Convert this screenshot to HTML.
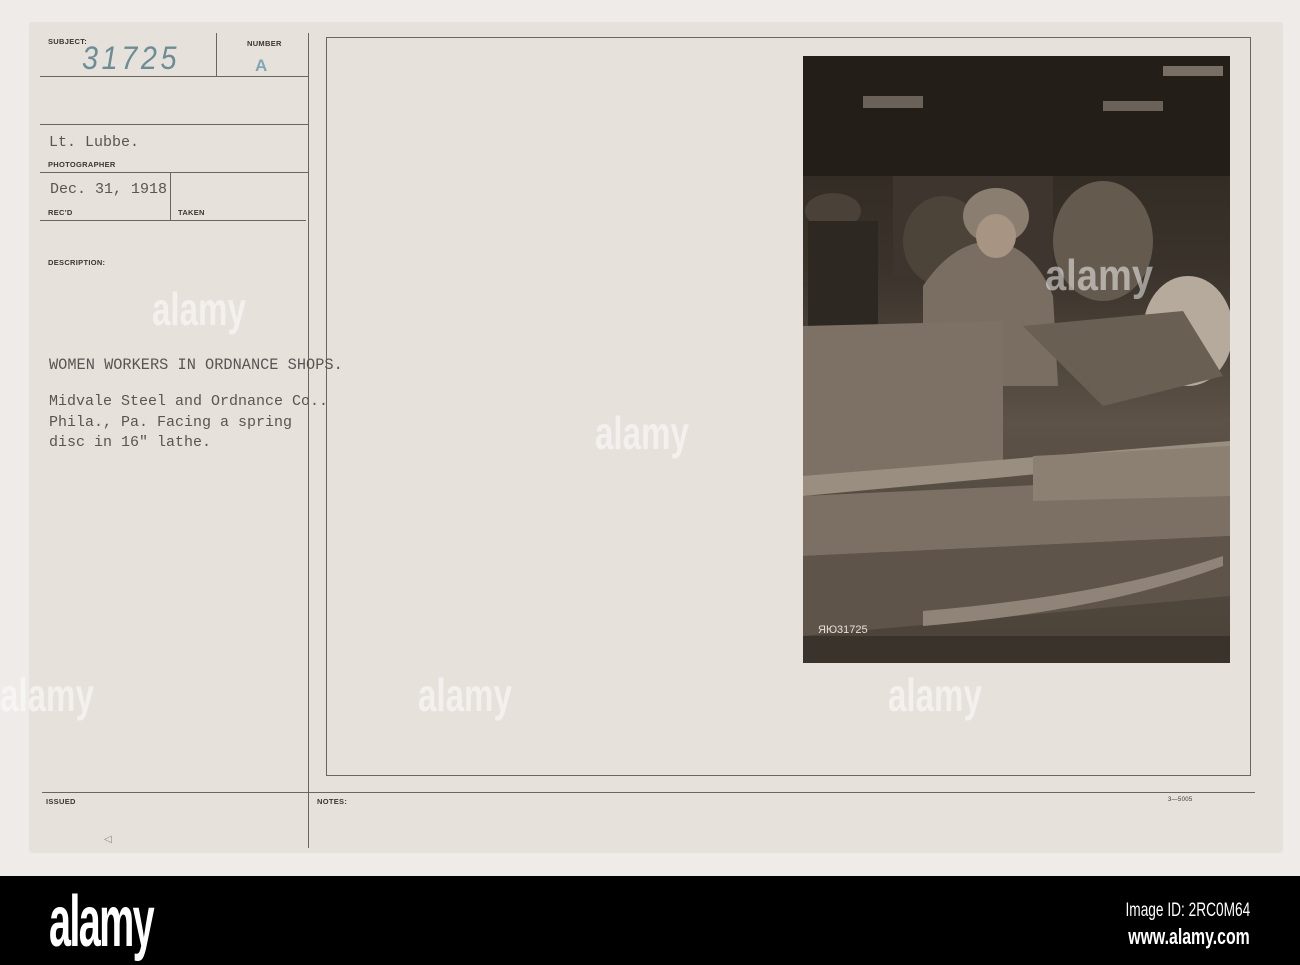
<!DOCTYPE html>
<html><head><meta charset="utf-8"><style>
*{margin:0;padding:0;box-sizing:border-box}
body{width:1300px;height:965px;background:#efebe9;position:relative;overflow:hidden;font-family:"Liberation Sans",sans-serif}
.card{position:absolute;left:29px;top:22px;width:1254px;height:831px;background:#e7e1dc;border-radius:3px}
.l{position:absolute;background:#6a6560}
.t{position:absolute;font-family:"Liberation Mono",monospace;color:#5a5550;font-size:15px;white-space:pre}
.s{position:absolute;font-family:"Liberation Sans",sans-serif;font-size:7.5px;font-weight:bold;color:#3a3632;letter-spacing:.3px}
.wm{position:absolute;color:rgba(255,255,255,.5);font-family:"Liberation Sans",sans-serif;font-weight:bold;transform:scaleX(.72);transform-origin:left top}
.bar{position:absolute;left:0;top:876px;width:1300px;height:89px;background:#000}
</style></head><body>
<div class="card"></div>
<div class="l" style="left:40px;top:76px;width:268px;height:1px"></div>
<div class="l" style="left:216px;top:33px;width:1px;height:44px"></div>
<div class="l" style="left:40px;top:124px;width:268px;height:1px"></div>
<div class="l" style="left:40px;top:172px;width:268px;height:1px"></div>
<div class="l" style="left:170px;top:173px;width:1px;height:47px"></div>
<div class="l" style="left:40px;top:220px;width:266px;height:1px"></div>
<div class="l" style="left:308px;top:33px;width:1px;height:815px"></div>
<div style="position:absolute;left:326px;top:37px;width:925px;height:739px;border:1px solid #6a6560"></div>
<div class="l" style="left:42px;top:792px;width:1213px;height:1px"></div>
<div class="s" style="left:48px;top:37px">SUBJECT:</div>
<div class="s" style="left:247px;top:39px">NUMBER</div>
<div style="position:absolute;left:82px;top:40px;font-family:'Liberation Sans',sans-serif;font-style:italic;font-size:32px;color:#6b8d96;letter-spacing:4px;transform:scaleX(.9);transform-origin:left top">31725</div>
<div style="position:absolute;left:255px;top:56px;font-family:'Liberation Sans';font-weight:bold;font-size:17px;color:#7fa8b2">A</div>
<div class="t" style="left:49px;top:134px;font-size:15px">Lt. Lubbe.</div>
<div class="s" style="left:48px;top:160px">PHOTOGRAPHER</div>
<div class="t" style="left:50px;top:181px">Dec. 31, 1918</div>
<div class="s" style="left:48px;top:208px">REC'D</div>
<div class="s" style="left:178px;top:208px">TAKEN</div>
<div class="s" style="left:48px;top:258px">DESCRIPTION:</div>
<div class="t" style="left:49px;top:356px;font-size:15.3px">WOMEN WORKERS IN ORDNANCE SHOPS.</div>
<div class="t" style="left:49px;top:392px;font-size:15px;line-height:20.5px">Midvale Steel and Ordnance Co..
Phila., Pa. Facing a spring
disc in 16" lathe.</div>
<div class="s" style="left:46px;top:797px">ISSUED</div>
<div class="s" style="left:317px;top:797px">NOTES:</div>
<div class="s" style="left:1168px;top:797px;font-weight:normal;font-size:6px">3—5005</div>
<div style="position:absolute;left:104px;top:834px;font-size:10px;color:#888">◁</div>
<svg style="position:absolute;left:803px;top:56px" width="427" height="607" viewBox="0 0 427 607">
<defs><linearGradient id="g" x1="0" y1="0" x2="0" y2="1"><stop offset="0" stop-color="#2a241e"/><stop offset=".35" stop-color="#3a332b"/><stop offset=".6" stop-color="#5c5247"/><stop offset="1" stop-color="#4a4238"/></linearGradient></defs>
<rect width="427" height="607" fill="url(#g)"/>
<rect x="0" y="0" width="427" height="120" fill="#241e19"/>
<rect x="60" y="40" width="60" height="12" fill="#6a6258"/><rect x="300" y="45" width="60" height="10" fill="#6a6258"/><rect x="360" y="10" width="60" height="10" fill="#776e64"/>
<rect x="90" y="120" width="160" height="100" fill="#3e362e"/>
<ellipse cx="300" cy="185" rx="50" ry="60" fill="#655a4e"/>
<ellipse cx="140" cy="185" rx="40" ry="45" fill="#4c4339"/>
<ellipse cx="30" cy="155" rx="28" ry="18" fill="#4a4138"/>
<rect x="5" y="165" width="70" height="120" fill="#2e2823"/>
<path d="M120 230 Q150 185 190 185 Q230 190 250 240 L255 330 L120 330 Z" fill="#7a6e62"/>
<ellipse cx="193" cy="160" rx="33" ry="28" fill="#8a7e70"/>
<ellipse cx="193" cy="180" rx="20" ry="22" fill="#a89482"/>
<ellipse cx="385" cy="275" rx="45" ry="55" fill="#b5aa9c"/>
<path d="M0 270 L200 265 L200 420 L0 440 Z" fill="#7d7165"/>
<path d="M220 270 L380 255 L420 320 L300 350 Z" fill="#6a5f53"/>
<path d="M0 440 L427 420 L427 480 L0 500 Z" fill="#7c7064"/>
<path d="M0 420 L427 385 L427 400 L0 440 Z" fill="#9a8e80"/>
<path d="M230 400 L427 390 L427 440 L230 445 Z" fill="#8c8072"/>
<path d="M0 500 L427 480 L427 540 L0 580 Z" fill="#5e544a"/>
<path d="M120 555 Q300 540 420 500 L420 510 Q300 555 120 570 Z" fill="#8f8477"/>
<rect x="0" y="580" width="427" height="27" fill="#3a332c"/>
<text x="15" y="577" font-family="Liberation Sans" font-size="11" fill="#e8e0d8">ЯЮ31725</text>
<text x="242" y="234" font-family="Liberation Sans" font-weight="bold" font-size="44" fill="rgba(255,255,255,.5)" textLength="108" lengthAdjust="spacingAndGlyphs">alamy</text>
</svg>
<div class="wm" style="left:152px;top:282px;font-size:46px">alamy</div>
<div class="wm" style="left:595px;top:406px;font-size:46px">alamy</div>
<div class="wm" style="left:0px;top:668px;font-size:46px">alamy</div>
<div class="wm" style="left:418px;top:668px;font-size:46px">alamy</div>
<div class="wm" style="left:888px;top:668px;font-size:46px">alamy</div>
<div class="bar">
<div style="position:absolute;left:49px;top:10px;color:#fff;font-weight:bold;font-size:72px;transform:scaleX(.55);transform-origin:left top;letter-spacing:-3px;line-height:1">alamy</div>
<div style="position:absolute;right:50px;top:24px;color:#fff;font-size:19px;transform:scaleX(.72);transform-origin:right top">Image ID: 2RC0M64</div>
<div style="position:absolute;right:50px;top:48px;color:#fff;font-weight:bold;font-size:22px;transform:scaleX(.72);transform-origin:right top">www.alamy.com</div>
</div>
</body></html>
